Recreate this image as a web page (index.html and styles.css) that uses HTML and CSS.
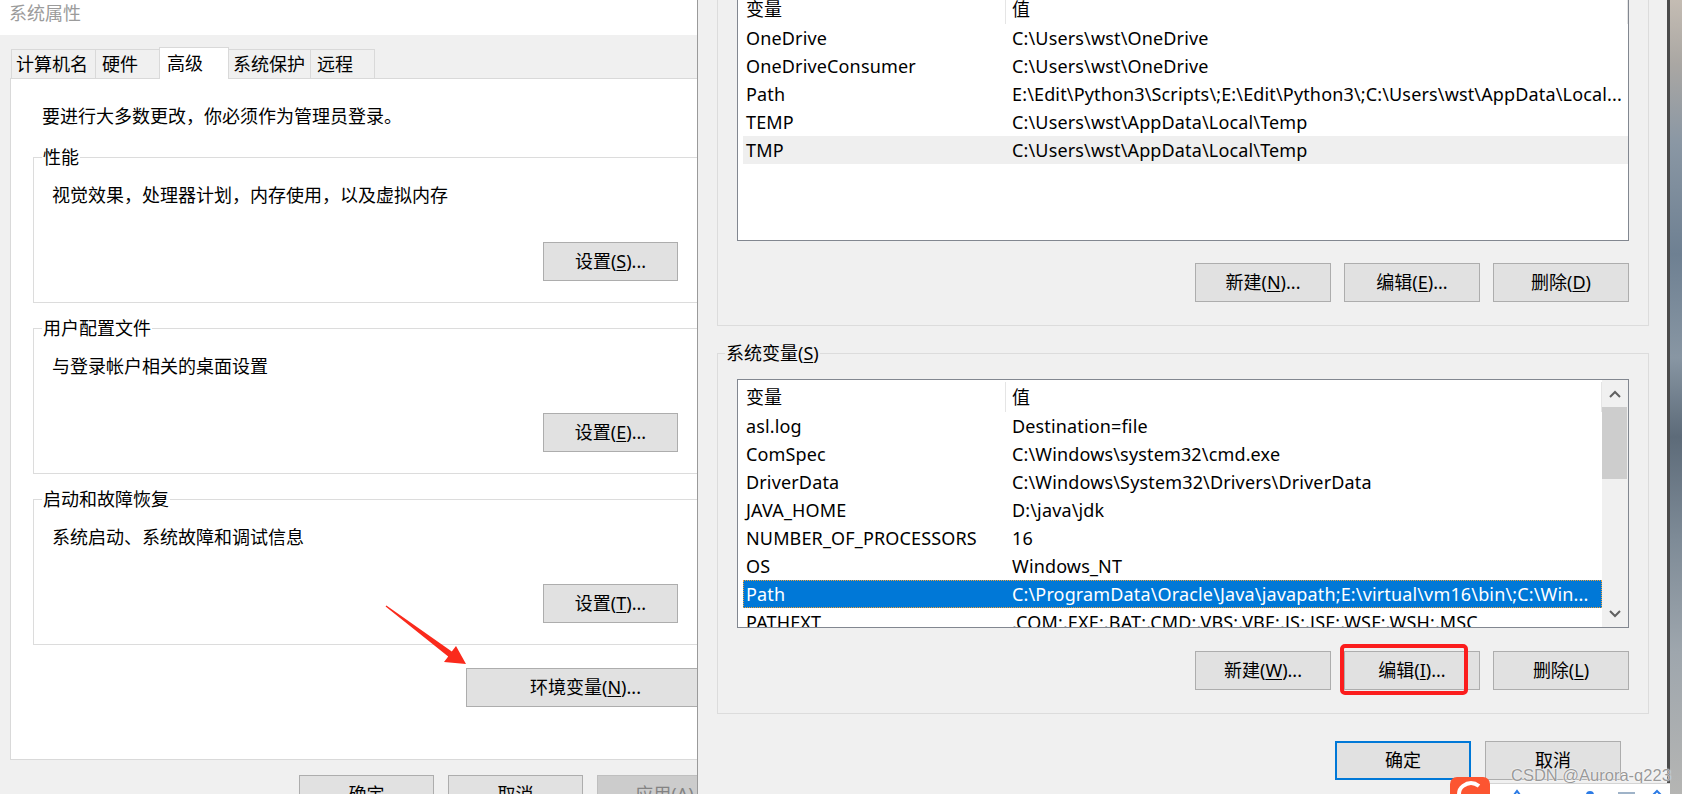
FILE: index.html
```html
<!DOCTYPE html>
<html lang="zh-CN">
<head>
  <meta charset="UTF-8">
  <title>系统属性 - 环境变量</title>
  <link rel="stylesheet" href="styles.css">
</head>
<body>

  <div class="screen">

    <!-- 系统属性 窗口 (左) -->
    <div class="sys-dialog">
      <div class="titlebar">系统属性</div>
      <div class="sys-body">
        <div class="tabs">
          <div class="tab tab-name">计算机名</div>
          <div class="tab tab-hw">硬件</div>
          <div class="tab tab-active">高级</div>
          <div class="tab tab-protect">系统保护</div>
          <div class="tab tab-remote">远程</div>
        </div>

        <div class="tab-panel">
          <p class="admin-note">要进行大多数更改，你必须作为管理员登录。</p>

          <fieldset class="group">
            <legend>性能</legend>
            <p class="group-desc">视觉效果，处理器计划，内存使用，以及虚拟内存</p>
            <div class="group-actions"><button class="btn">设置(<u>S</u>)...</button></div>
          </fieldset>

          <fieldset class="group">
            <legend>用户配置文件</legend>
            <p class="group-desc">与登录帐户相关的桌面设置</p>
            <div class="group-actions"><button class="btn">设置(<u>E</u>)...</button></div>
          </fieldset>

          <fieldset class="group">
            <legend>启动和故障恢复</legend>
            <p class="group-desc">系统启动、系统故障和调试信息</p>
            <div class="group-actions"><button class="btn">设置(<u>T</u>)...</button></div>
          </fieldset>

          <div class="env-row"><button class="btn btn-env">环境变量(<u>N</u>)...</button></div>
        </div>

        <div class="dialog-buttons">
          <button class="btn">确定</button>
          <button class="btn">取消</button>
          <button class="btn" disabled>应用(<u>A</u>)</button>
        </div>
      </div>
    </div>

    <!-- 环境变量 窗口 (右) -->
    <div class="env-dialog">
      <div class="env-inner">

        <fieldset class="env-group">
          <legend>wst 的用户变量(<u>U</u>)</legend>
          <div class="listbox listbox-user">
            <div class="list-main">
              <div class="list-head">
                <div class="head-name">变量</div>
                <div class="head-value">值</div>
              </div>
              <div class="list-row"><div class="cell-name">OneDrive</div><div class="cell-value">C:\Users\wst\OneDrive</div></div>
              <div class="list-row"><div class="cell-name">OneDriveConsumer</div><div class="cell-value">C:\Users\wst\OneDrive</div></div>
              <div class="list-row"><div class="cell-name">Path</div><div class="cell-value">E:\Edit\Python3\Scripts\;E:\Edit\Python3\;C:\Users\wst\AppData\Local...</div></div>
              <div class="list-row"><div class="cell-name">TEMP</div><div class="cell-value">C:\Users\wst\AppData\Local\Temp</div></div>
              <div class="list-row hot"><div class="cell-name">TMP</div><div class="cell-value">C:\Users\wst\AppData\Local\Temp</div></div>
            </div>
          </div>
          <div class="list-actions">
            <button class="btn btn-wide">新建(<u>N</u>)...</button>
            <button class="btn btn-wide">编辑(<u>E</u>)...</button>
            <button class="btn btn-wide">删除(<u>D</u>)</button>
          </div>
        </fieldset>

        <fieldset class="env-group env-group-sys">
          <legend>系统变量(<u>S</u>)</legend>
          <div class="listbox listbox-sys">
            <div class="list-main">
              <div class="list-head">
                <div class="head-name">变量</div>
                <div class="head-value">值</div>
              </div>
              <div class="list-row"><div class="cell-name">asl.log</div><div class="cell-value">Destination=file</div></div>
              <div class="list-row"><div class="cell-name">ComSpec</div><div class="cell-value">C:\Windows\system32\cmd.exe</div></div>
              <div class="list-row"><div class="cell-name">DriverData</div><div class="cell-value">C:\Windows\System32\Drivers\DriverData</div></div>
              <div class="list-row"><div class="cell-name">JAVA_HOME</div><div class="cell-value">D:\java\jdk</div></div>
              <div class="list-row"><div class="cell-name">NUMBER_OF_PROCESSORS</div><div class="cell-value">16</div></div>
              <div class="list-row"><div class="cell-name">OS</div><div class="cell-value">Windows_NT</div></div>
              <div class="list-row selected"><div class="cell-name">Path</div><div class="cell-value">C:\ProgramData\Oracle\Java\javapath;E:\virtual\vm16\bin\;C:\Win...</div></div>
              <div class="list-row"><div class="cell-name">PATHEXT</div><div class="cell-value">.COM;.EXE;.BAT;.CMD;.VBS;.VBE;.JS;.JSE;.WSF;.WSH;.MSC</div></div>
            </div>
            <div class="scrollbar">
              <div class="sb-arrow">
                <svg width="12" height="8" viewBox="0 0 12 8"><polyline points="1,7 6,2 11,7" fill="none" stroke="#606060" stroke-width="2"/></svg>
              </div>
              <div class="sb-thumb"></div>
              <div class="sb-track"></div>
              <div class="sb-arrow">
                <svg width="12" height="8" viewBox="0 0 12 8"><polyline points="1,1 6,6 11,1" fill="none" stroke="#606060" stroke-width="2"/></svg>
              </div>
            </div>
          </div>
          <div class="list-actions">
            <button class="btn btn-wide">新建(<u>W</u>)...</button>
            <div class="mark-wrap">
              <button class="btn btn-wide">编辑(<u>I</u>)...</button>
              <span class="red-mark"></span>
            </div>
            <button class="btn btn-wide">删除(<u>L</u>)</button>
          </div>
        </fieldset>

        <div class="env-buttons">
          <button class="btn btn-wide btn-default">确定</button>
          <button class="btn btn-wide">取消</button>
        </div>
      </div>
    </div>

    <div class="desktop"></div>
  </div>

  <!-- 标注箭头 -->
  <svg class="annot-arrow" width="1682" height="794" viewBox="0 0 1682 794">
    <polygon points="386.4,605.4 451.8,651.6 456,646 466,664 444,662 448.2,656.4 385.6,606.6" fill="#fa2a1c"/>
  </svg>

  <div class="watermark">CSDN @Aurora-q223</div>

  <div class="peek">
    <svg class="csdn-logo" width="40" height="17" viewBox="0 0 40 17">
      <rect x="0" y="0" width="40" height="34" rx="7" fill="#fc5531"/>
      <path d="M29 9 Q21 3 13 9 Q9 12 9 17" fill="none" stroke="#fff" stroke-width="4"/>
    </svg>
    <div class="peek-bar">
      <svg width="180" height="11" viewBox="0 0 180 11">
        <path d="M24 11 L27 7 L30 11" fill="none" stroke="#2c7be5" stroke-width="2"/>
        <circle cx="100" cy="11" r="4" fill="#2c7be5"/>
        <rect x="128" y="8" width="17" height="4" fill="#9fb3c8"/>
        <path d="M163 11 L167 7 L171 11" fill="none" stroke="#2c7be5" stroke-width="2"/>
      </svg>
    </div>
  </div>

</body>
</html>
```

FILE: styles.css
```css
* { box-sizing: border-box; }
body { margin: 0; width: 1682px; height: 794px; overflow: hidden; position: relative; background: #f0f0f0; color: #000; font-family: "Noto Sans", "Noto Sans CJK SC", sans-serif; font-size: 18px; }
p { margin: 0; }
u { text-underline-offset: 2px; }

.screen { display: flex; height: 794px; }

/* buttons */
.btn { flex: none; width: 135px; height: 39px; padding: 0; font: inherit; line-height: 37px; color: #000; background: #e1e1e1; border: 1px solid #adadad; white-space: nowrap; }
.btn:disabled { background: #cccccc; border-color: #bfbfbf; color: #838383; }
.btn-wide { width: 136px; }
.btn-default { border: 2px solid #0078d7; line-height: 35px; }
.btn-env { width: 239px; }

/* left dialog */
.sys-dialog { flex: none; width: 697px; height: 794px; overflow: hidden; background: #f0f0f0; }
.titlebar { height: 35px; padding-left: 9px; line-height: 26px; background: #fff; color: #9b9b9b; }
.sys-body { width: 742px; padding: 13px 0 0 10px; }

.tabs { display: flex; align-items: flex-start; height: 30px; padding-left: 1px; position: relative; z-index: 1; }
.tab { height: 29px; margin-top: 1px; margin-right: -1px; padding-left: 5px; line-height: 28px; border: 1px solid #d9d9d9; border-bottom: 0; background: #f0f0f0; white-space: nowrap; }
.tab-name { width: 85px; padding-left: 4px; }
.tab-hw { width: 66px; padding-left: 6px; }
.tab-active { width: 70px; height: 32px; margin-top: -1px; margin-left: -1px; padding-left: 7px; line-height: 30px; background: #fff; position: relative; z-index: 1; }
.tab-protect { width: 83px; padding-left: 4px; }
.tab-remote { width: 65px; padding-left: 6px; }

.tab-panel { width: 722px; height: 682px; padding-left: 22px; background: #fff; border: 1px solid #d9d9d9; }
.admin-note { margin: 25px 0 0 9px; line-height: 24px; }

.group { width: 672px; min-width: 0; margin: 17px 0 0; padding: 0 0 21px; border: 1px solid #dcdcdc; }
.group + .group { margin-top: 13px; }
.group legend { margin-left: 8px; padding: 0 1px; line-height: 24px; }
.group-desc { margin: 14px 0 0 18px; line-height: 24px; }
.group-actions { display: flex; justify-content: flex-end; margin-top: 35px; padding-right: 26px; }

.env-row { display: flex; justify-content: flex-end; margin-top: 23px; padding-right: 26px; }
.dialog-buttons { display: flex; justify-content: flex-end; gap: 14px; margin-top: 15px; padding-right: 10px; }

/* right dialog */
.env-dialog { flex: none; width: 973px; height: 794px; overflow: hidden; padding: 0 18px 0 19px; background: #f0f0f0; border-left: 1px solid #9a9a9a; border-right: 3px solid #4b4b4b; }
.env-inner { margin-top: -47px; }

.env-group { min-width: 0; margin: 0; padding: 0 0 23px; border: 1px solid #dcdcdc; }
.env-group + .env-group { margin-top: 15px; }
.env-group legend { margin-left: 7px; padding: 0 1px; line-height: 24px; }

.listbox { display: flex; margin: 14px 19px 0; background: #fff; border: 1px solid #828790; overflow: hidden; }
.listbox-user { height: 250px; }
.listbox-sys { height: 249px; }
.list-main { flex: 1; min-width: 0; padding-left: 5px; }

.list-head { display: flex; height: 32px; margin-left: -5px; padding-top: 2px; line-height: 30px; }
.head-name { width: 268px; padding-left: 8px; border-right: 1px solid #e5e5e5; }
.head-value { flex: 1; padding-left: 6px; border-right: 1px solid #e5e5e5; }

.list-row { display: flex; height: 28px; line-height: 28px; white-space: nowrap; letter-spacing: 0.15px; }
.cell-name { flex: none; width: 266px; padding-left: 3px; }
.cell-value { flex: 1; min-width: 0; padding-left: 3px; overflow: hidden; }
.list-row.hot { background: #efefef; }
.list-row.selected { background: #0078d7; color: #fff; outline: 1px dotted #f2a23a; outline-offset: -1px; }

.scrollbar { flex: none; width: 26px; display: flex; flex-direction: column; background: #f0f0f0; }
.sb-arrow { height: 27px; display: flex; align-items: center; justify-content: center; padding-right: 1px; }
.sb-thumb { height: 72px; margin-right: 1px; background: #cdcdcd; }
.sb-track { flex: 1; }
.sb-arrow:last-child { height: 26px; }

.list-actions { display: flex; justify-content: flex-end; gap: 13px; margin: 22px 19px 0 0; }
.env-group-sys .list-actions { margin-top: 23px; }
.mark-wrap { position: relative; flex: none; }
.red-mark { position: absolute; left: -4px; top: -7px; width: 128px; height: 51px; border: 4px solid #fb1d1d; border-radius: 5px; }

.env-buttons { display: flex; justify-content: flex-end; gap: 14px; margin-top: 27px; padding-right: 28px; }

.desktop { flex: 1; background: linear-gradient(180deg, #c4bcb3 0%, #aaa7a3 8%, #8a97a4 18%, #6e8092 32%, #8896a3 45%, #5d6b79 55%, #7e8b97 68%, #9ea6ad 82%, #b5b5b3 100%); }

/* overlays */
.annot-arrow { position: absolute; left: 0; top: 0; pointer-events: none; }
.watermark { position: absolute; left: 1511px; top: 763px; font-family: "Liberation Sans", sans-serif; font-size: 16.5px; line-height: 24px; color: #999; text-shadow: 0 0 1px #fff, 0 0 2px #fff; white-space: nowrap; }
.peek { position: absolute; left: 1450px; top: 777px; display: flex; align-items: flex-end; }
.csdn-logo { display: block; }
.peek-bar { width: 180px; height: 11px; background: #fff; border-top: 1px solid #d4d4d4; }
.peek-bar svg { display: block; }
```
